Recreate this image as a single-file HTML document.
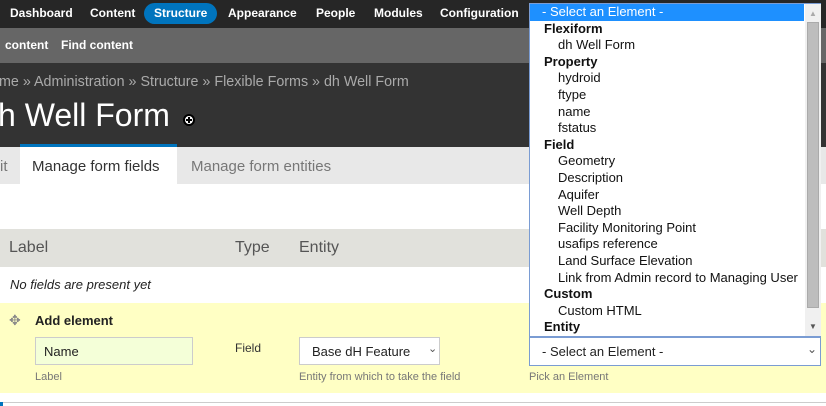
<!DOCTYPE html>
<html><head><meta charset="utf-8"><style>
*{margin:0;padding:0;box-sizing:border-box}
body{width:826px;height:406px;overflow:hidden;background:#fff;font-family:"Liberation Sans",sans-serif;position:relative}
.a{position:absolute;white-space:nowrap}
.nav{left:0;top:0;width:826px;height:28px;background:#262626}
.nav span{position:absolute;top:6px;color:#fff;font-weight:bold;font-size:12px}
.sec{left:0;top:28px;width:826px;height:35px;background:#666}
.hd{left:0;top:63px;width:826px;height:84px;background:#333}
.tabs{left:0;top:147px;width:826px;height:37px;background:#e8e8e8}
.th{left:0;top:229px;width:826px;height:38px;background:#e1e1dc}
.yl{left:0;top:303px;width:826px;height:90px;background:#ffffc4}
.dd{left:529px;top:3px;width:292px;height:334px;background:#fff;border:1px solid #7a9cd3;font-size:13px;color:#111}
.dd div{position:absolute;left:0;height:17px;line-height:16px}
.b{font-weight:bold;padding-left:14px}
.i{padding-left:28px}
</style></head><body>
<div class="a nav">
<span style="left:10px">Dashboard</span>
<span style="left:90px">Content</span>
<span style="left:144px;top:3px;background:#0074bd;border-radius:11px;padding:3px 10px 4px;">Structure</span>
<span style="left:228px">Appearance</span>
<span style="left:316px">People</span>
<span style="left:374px">Modules</span>
<span style="left:440px">Configuration</span>
</div>
<div class="a sec"><span class="a" style="left:5px;top:10px;color:#fff;font-weight:bold;font-size:12px">content</span><span class="a" style="left:61px;top:10px;color:#fff;font-weight:bold;font-size:12px">Find content</span></div>
<div class="a hd">
<span class="a" style="left:-1px;top:11px;color:#aaa;font-size:14.3px">me » Administration » Structure » Flexible Forms » dh Well Form</span>
<span class="a" style="left:-2px;top:34px;color:#fff;font-size:32px">h Well Form</span>
<span class="a" style="left:183px;top:51px;width:12px;height:12px;border-radius:50%;background:#fff;border:2px solid #000;"></span>
<span class="a" style="left:186px;top:56px;width:6px;height:2px;background:#000"></span>
<span class="a" style="left:188px;top:54px;width:2px;height:6px;background:#000"></span>
</div>
<div class="a tabs">
<span class="a" style="left:0;top:11px;color:#777;font-size:15px">it</span>
<div class="a" style="left:20px;top:-3px;width:157px;height:40px;background:#fff;border-top:3px solid #0074bd"></div>
<span class="a" style="left:32px;top:11px;color:#333;font-size:15px">Manage form fields</span>
<span class="a" style="left:191px;top:11px;color:#777;font-size:15px">Manage form entities</span>
</div>
<div class="a th">
<span class="a" style="left:9px;top:10px;color:#555;font-size:16px">Label</span>
<span class="a" style="left:235px;top:10px;color:#555;font-size:16px">Type</span>
<span class="a" style="left:299px;top:10px;color:#555;font-size:16px">Entity</span>
</div>
<span class="a" style="left:10px;top:277px;color:#222;font-size:13px;font-style:italic">No fields are present yet</span>
<div class="a yl">
<span class="a" style="left:9px;top:9px;color:#888;font-size:14px">✥</span>
<span class="a" style="left:35px;top:10px;color:#222;font-weight:bold;font-size:13px">Add element</span>
<div class="a" style="left:35px;top:34px;width:158px;height:28px;background:#f4ffd8;border:1px solid #ccc;"></div>
<span class="a" style="left:44px;top:41px;color:#222;font-size:13px">Name</span>
<span class="a" style="left:35px;top:68px;color:#777;font-size:11px">Label</span>
<span class="a" style="left:235px;top:38px;color:#333;font-size:12px">Field</span>
<div class="a" style="left:299px;top:34px;width:141px;height:28px;background:#fff;border:1px solid #ccc;"></div>
<span class="a" style="left:312px;top:41px;color:#222;font-size:13px">Base dH Feature</span>
<span class="a" style="left:428px;top:39px;color:#555;font-size:11px">⌄</span>
<span class="a" style="left:299px;top:68px;color:#777;font-size:11px">Entity from which to take the field</span>
<span class="a" style="left:529px;top:68px;color:#777;font-size:11px">Pick an Element</span>
</div>
<div class="a" style="left:0;top:402px;width:826px;height:1px;background:#ccc"></div>
<div class="a" style="left:0;top:402px;width:3px;height:4px;background:#0074bd"></div>
<div class="a" style="left:529px;top:337px;width:292px;height:29px;background:#fff;border:1px solid #7a9cd3;"></div>
<span class="a" style="left:542px;top:344px;color:#222;font-size:13px">- Select an Element -</span>
<span class="a" style="left:807px;top:342px;color:#555;font-size:12px">⌄</span>
<div class="a dd">
<div style="top:0;width:274px;background:#1e90ff;color:#fff;padding-left:12px">- Select an Element -</div>
<div class="b" style="top:16.6px">Flexiform</div>
<div class="i" style="top:33.2px">dh Well Form</div>
<div class="b" style="top:49.8px">Property</div>
<div class="i" style="top:66.4px">hydroid</div>
<div class="i" style="top:83px">ftype</div>
<div class="i" style="top:99.6px">name</div>
<div class="i" style="top:116.2px">fstatus</div>
<div class="b" style="top:132.8px">Field</div>
<div class="i" style="top:149.4px">Geometry</div>
<div class="i" style="top:166px">Description</div>
<div class="i" style="top:182.6px">Aquifer</div>
<div class="i" style="top:199.2px">Well Depth</div>
<div class="i" style="top:215.8px">Facility Monitoring Point</div>
<div class="i" style="top:232.4px">usafips reference</div>
<div class="i" style="top:249px">Land Surface Elevation</div>
<div class="i" style="top:265.6px">Link from Admin record to Managing User</div>
<div class="b" style="top:282.2px">Custom</div>
<div class="i" style="top:298.8px">Custom HTML</div>
<div class="b" style="top:315.4px">Entity</div>
<div style="left:275px;top:0;width:16px;height:332px;background:#f0f0f0"></div>
<div style="left:277px;top:18px;width:12px;height:286px;background:#bdbdbd;border:1px solid #aaa"></div>
<div style="left:279px;top:2px;font-size:8px;color:#aaa">▲</div>
<div style="left:279px;top:315px;font-size:8px;color:#555">▼</div>
</div>
</body></html>
